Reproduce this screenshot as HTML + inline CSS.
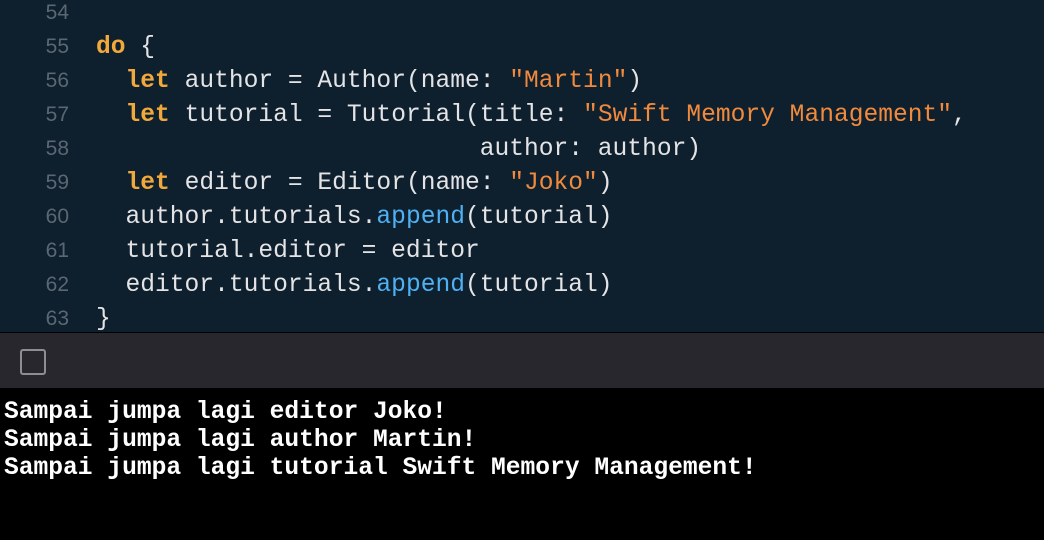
<!DOCTYPE html>
<html><head><meta charset="utf-8"><style>
html,body{margin:0;padding:0;width:1044px;height:540px;overflow:hidden;background:#000}
.ed{position:absolute;left:0;top:0;width:1044px;height:332px;background:#0e1f2d}
.ln{position:absolute;left:0;width:69px;text-align:right;color:#5b6772;font:21px/34px "Liberation Sans",sans-serif}
.cd{position:absolute;left:96px;white-space:pre;color:#e4e4e6;font:24.6px/34px "Liberation Mono",monospace}
.k{color:#f2a93b;font-weight:bold}.s{color:#f08a3e}.m{color:#4fb0f2}
.sep{position:absolute;left:0;top:332px;width:1044px;height:1px;background:#000}
.tb{position:absolute;left:0;top:333px;width:1044px;height:55px;background:#28272d}
.box{position:absolute;left:20px;top:349px;width:22px;height:22px;border:2px solid #8d8d92;border-radius:3px}
.con{position:absolute;left:4px;top:399px;white-space:pre;color:#fff;font:bold 24.6px/28px "Liberation Mono",monospace}
</style></head><body>
<div class="ed">
<div class="ln" style="top:-4px">54</div>
<div class="ln" style="top:30px">55</div>
<div class="ln" style="top:64px">56</div>
<div class="ln" style="top:98px">57</div>
<div class="ln" style="top:132px">58</div>
<div class="ln" style="top:166px">59</div>
<div class="ln" style="top:200px">60</div>
<div class="ln" style="top:234px">61</div>
<div class="ln" style="top:268px">62</div>
<div class="ln" style="top:302px">63</div>
<div class="cd" style="top:31px"><span class="k">do</span> {
  <span class="k">let</span> author = Author(name: <span class="s">"Martin"</span>)
  <span class="k">let</span> tutorial = Tutorial(title: <span class="s">"Swift Memory Management"</span>,
                          author: author)
  <span class="k">let</span> editor = Editor(name: <span class="s">"Joko"</span>)
  author.tutorials.<span class="m">append</span>(tutorial)
  tutorial.editor = editor
  editor.tutorials.<span class="m">append</span>(tutorial)
}</div>
</div>
<div class="sep"></div>
<div class="tb"></div>
<div class="box"></div>
<div class="con">Sampai jumpa lagi editor Joko!
Sampai jumpa lagi author Martin!
Sampai jumpa lagi tutorial Swift Memory Management!</div>
</body></html>
